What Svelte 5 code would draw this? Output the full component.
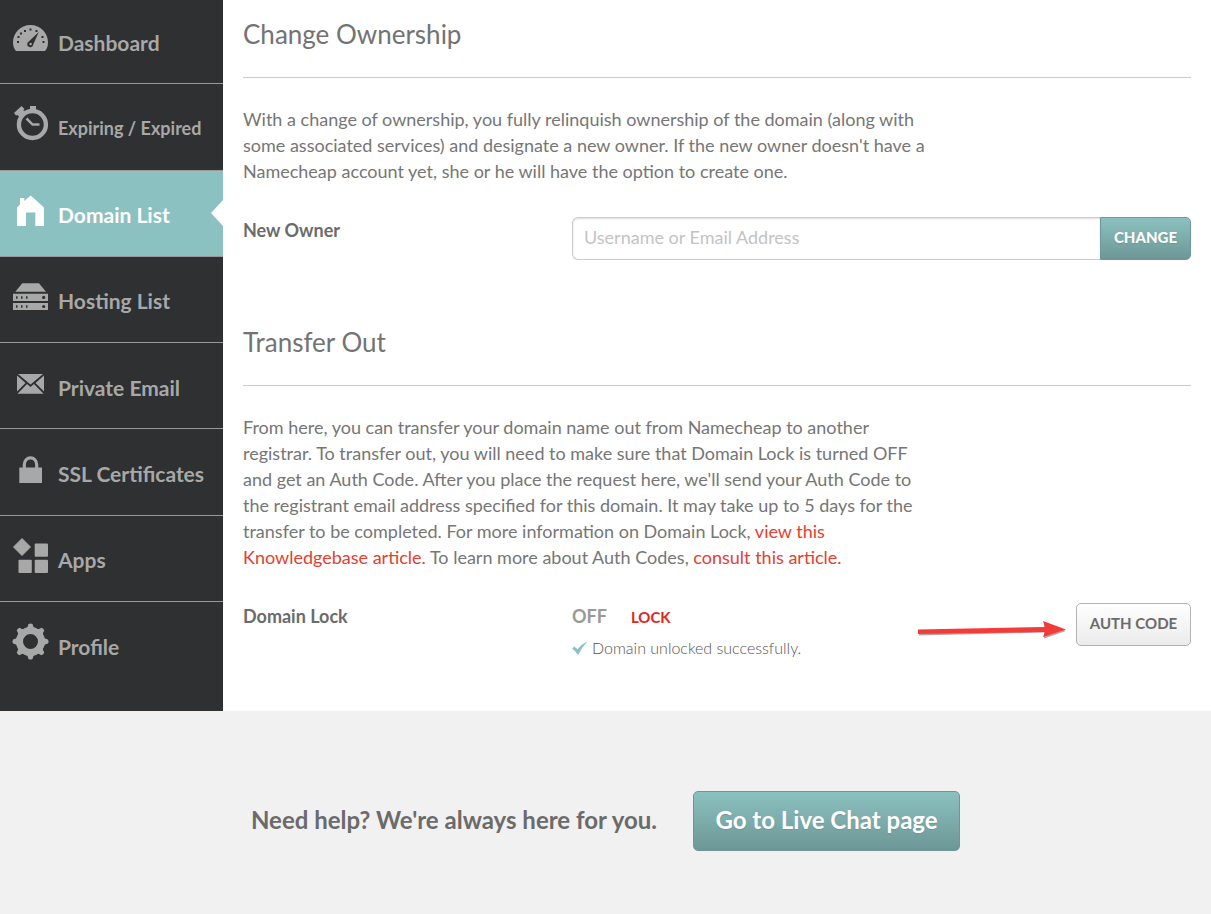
<script>
    const menu = [
        { id: "dashboard", label: "Dashboard" },
        { id: "expiring", label: "Expiring / Expired" },
        { id: "domains", label: "Domain List" },
        { id: "hosting", label: "Hosting List" },
        { id: "email", label: "Private Email" },
        { id: "ssl", label: "SSL Certificates" },
        { id: "apps", label: "Apps" },
        { id: "profile", label: "Profile" },
    ];

    let active = "domains";
    let newOwner = "";
    let locked = false;
    let showMessage = true;

    function toggleLock() {
        locked = !locked;
        showMessage = !locked;
    }
</script>

<div class="page">
    <nav class="sidebar">
        <ul>
            {#each menu as item}
                <li class:active={item.id === active}>
                    <a href="#{item.id}" on:click|preventDefault={() => (active = item.id)}>
                        <svg viewBox="0 0 36 36" aria-hidden="true">
                            {#if item.id === "dashboard"}
                                <path d="M4 31C2 29 1 26 1 22.500C1 13 8.500 5 18.500 5S36 13 36 22.500C36 26 35 29 33 31Z" />
                                <g class="cut">
                                    <path d="M26.800 12L21.200 24.500A3 3 0 1 1 16.500 21.800Z" />
                                    <rect x="17.500" y="8.500" width="2" height="2" />
                                    <rect x="12" y="10" width="2" height="2" />
                                    <rect x="23.500" y="10" width="2" height="2" />
                                    <rect x="8" y="12.500" width="2" height="2" />
                                    <rect x="5.500" y="16" width="2" height="2" />
                                    <rect x="29.500" y="16" width="2" height="2" />
                                    <rect x="5" y="21" width="2" height="2" />
                                    <rect x="30.500" y="21" width="2" height="2" />
                                </g>
                                <circle cx="18.600" cy="24" r="1.200" />
                            {:else if item.id === "expiring"}
                                <circle class="line" cx="20.400" cy="18.500" r="13.500" stroke-width="4.400" />
                                <path d="M18 0H24V5H18ZM2 7L9.500 0L12.500 3L11.500 4.500L13 6.500L8 11.500L5.500 9L4 9.500Z" />
                                <path class="line" d="M14.500 12.500L20.600 18.600H27.500" stroke-width="2.500" />
                            {:else if item.id === "domains"}
                                <path d="M5 34V15.500L8 12.500V6H12.300V9L18.700 3.500L32 15.500V34H23.300V20.500H14V34Z" />
                            {:else if item.id === "hosting"}
                                <path d="M10.300 5.300H27L34 13.700H3.300Z" />
                                <path d="M1 15.700H36V23H1ZM1 25H36V32H1Z" />
                                <g class="cut">
                                    <path d="M4 18.300h1.500v2.500H4zM9 18.300h1.500v2.500H9zM14 18.300h1.500v2.500H14zM4 27.300h1.500v2.500H4zM9 27.300h1.500v2.500H9zM14 27.300h1.500v2.500H14z" />
                                    <circle cx="31.700" cy="19.400" r="1.600" />
                                    <circle cx="31.700" cy="28.500" r="1.600" />
                                </g>
                            {:else if item.id === "email"}
                                <path d="M6 9H31L18.500 19.500ZM5 10.500L13.500 18L5 26.500ZM32 10.500V26.500L23.500 18ZM15 19L18.500 22L22 19L31.500 28.700H5.500Z" />
                            {:else if item.id === "ssl"}
                                <path d="M7.300 16.500H30V32H7.300Z" />
                                <path class="line" d="M12.300 17V13.500A6.200 6.700 0 0 1 24.700 13.500V17" stroke-width="3.200" />
                            {:else if item.id === "apps"}
                                <path d="M10 1.500L18.500 10L10 18.500L1.500 10Z" stroke="currentColor" stroke-width="1" stroke-linejoin="round" />
                                <rect x="22.700" y="6.500" width="13.300" height="13.300" rx="1" />
                                <rect x="6.500" y="22.700" width="13.300" height="13.300" rx="1" />
                                <rect x="22.700" y="22.700" width="13.300" height="13.300" rx="1" />
                            {:else}
                                <circle class="line" cx="18.500" cy="17.500" r="11" stroke-width="7" />
                                {#each [0, 45, 90, 135, 180, 225, 270, 315] as angle}
                                    <path d="M12 6L15.500 3L16.500 0Q18.500 -1 20.500 0L21.500 3L25 6Z" transform="rotate({angle} 18.500 17.500)" />
                                {/each}
                            {/if}
                        </svg>
                        <span class:long={item.id === "expiring"}>{item.label}</span>
                    </a>
                </li>
            {/each}
        </ul>
    </nav>

    <main>
        <section>
            <h2>Change Ownership</h2>
            <p>
                With a change of ownership, you fully relinquish ownership of the domain (along with<br />
                some associated services) and designate a new owner. If the new owner doesn't have a<br />
                Namecheap account yet, she or he will have the option to create one.
            </p>
            <form class="row" on:submit|preventDefault>
                <label for="new-owner">New Owner</label>
                <div class="input-group">
                    <input id="new-owner" type="text" placeholder="Username or Email Address" bind:value={newOwner} />
                    <button class="btn teal change">CHANGE</button>
                </div>
            </form>
        </section>

        <section>
            <h2>Transfer Out</h2>
            <p>
                From here, you can transfer your domain name out from Namecheap to another<br />
                registrar. To transfer out, you will need to make sure that Domain Lock is turned OFF<br />
                and get an Auth Code. After you place the request here, we'll send your Auth Code to<br />
                the registrant email address specified for this domain. It may take up to 5 days for the<br />
                transfer to be completed. For more information on Domain Lock, <a href="#lock-article">view this<br />
                Knowledgebase article.</a> To learn more about Auth Codes, <a href="#auth-article">consult this article.</a>
            </p>
            <div class="row">
                <strong class="name">Domain Lock</strong>
                <div class="lock">
                    <div>
                        <div class="state">
                            <strong>{locked ? "ON" : "OFF"}</strong>
                            <button class="toggle" on:click={toggleLock}>{locked ? "UNLOCK" : "LOCK"}</button>
                        </div>
                        {#if showMessage}
                            <div class="message">
                                <svg viewBox="0 0 16 14" aria-hidden="true">
                                    <path d="M0 7.500L2.500 5.500L5.500 8.500Q9.500 3 15.500 0.500Q10 6 6.500 13.500H5.500Q3.500 10 0 7.500Z" />
                                </svg>
                                Domain unlocked successfully.
                            </div>
                        {/if}
                    </div>
                    <div class="auth">
                        <svg class="arrow" viewBox="0 0 148 18" aria-hidden="true">
                            <path class="shade" d="M1 12.500L126 6.500V1.500L148 10L126 17.500V11.500L1 14.500Z" />
                            <path d="M0 8.500L127 6L125 0L148 8.500L125 16L127 11L0 13Z" />
                        </svg>
                        <button class="btn light">AUTH CODE</button>
                    </div>
                </div>
            </div>
        </section>
    </main>
</div>

<footer>
    <strong>Need help? We're always here for you.</strong>
    <button class="btn teal chat">Go to Live Chat page</button>
</footer>

<style>
    :global(body) {
        background: #f1f1f1;
        color: #6b6b6b;
        font-family: Lato, "Open Sans", sans-serif;
    }

    .page {
        display: grid;
        grid-template-columns: 223px 1fr;
        background: #fff;
    }

    .sidebar {
        background: #2e3031;
        overflow: hidden;
    }

    .sidebar ul {
        display: grid;
        grid-auto-rows: 1fr;
        height: 690px;
        margin: -2px 0 0;
        padding: 0;
        list-style: none;
    }

    .sidebar li {
        position: relative;
        border-bottom: 1px solid #999;
    }

    .sidebar li:last-child {
        border-bottom: none;
    }

    .sidebar a {
        display: flex;
        align-items: center;
        gap: 10px;
        height: 100%;
        padding: 0 0 0 12px;
        color: #a7a8a7;
        font-size: 21px;
        font-weight: 700;
        text-decoration: none;
    }

    .sidebar svg {
        width: 36px;
        height: 36px;
        flex: none;
        margin-bottom: 6px;
        fill: currentColor;
        overflow: visible;
    }

    .sidebar .line {
        fill: none;
        stroke: currentColor;
    }

    .sidebar .cut {
        fill: #2e3031;
    }

    .sidebar span {
        padding-top: 3px;
        white-space: nowrap;
    }

    .sidebar .long {
        font-size: 18px;
    }

    .sidebar .active {
        background: #8bc1c0;
    }

    .sidebar .active a {
        color: #fff;
    }

    .sidebar .active .cut {
        fill: #8bc1c0;
    }

    .sidebar .active::after {
        content: "";
        position: absolute;
        top: 50%;
        right: 0;
        margin-top: -13px;
        border: 13px solid transparent;
        border-left: none;
        border-right: 12px solid #fff;
    }

    main {
        padding: 0 20px 2px;
    }

    section {
        padding-bottom: 48px;
    }

    h2 {
        margin: 0 0 28px;
        padding: 18px 0 27px;
        border-bottom: 1px solid #ccc;
        color: #737373;
        font-size: 26px;
        font-weight: 400;
        line-height: 32px;
    }

    p {
        margin: 0 0 33px;
        color: #767676;
        font-size: 18px;
        line-height: 26px;
    }

    p a {
        color: #e5402f;
        text-decoration: none;
    }

    .row {
        display: grid;
        grid-template-columns: 329px 1fr;
        font-size: 18px;
        line-height: 26px;
    }

    .row label,
    .row .name {
        font-weight: 700;
    }

    .input-group {
        display: flex;
        height: 43px;
    }

    input {
        flex: 1;
        min-width: 0;
        padding: 0 11px 3px;
        border: 1px solid #ccc;
        border-right: none;
        border-radius: 6px 0 0 6px;
        box-shadow: inset 0 1px 2px #ddd;
        color: #666;
        font: inherit;
    }

    input::placeholder {
        color: #c3c3c3;
    }

    .btn {
        box-sizing: border-box;
        padding: 0 0 3px;
        border-radius: 5px;
        font: 700 15px Lato, sans-serif;
        cursor: pointer;
    }

    .teal {
        border: 1px solid #6b9897;
        background: linear-gradient(#8bc1c0, #6d9796);
        color: #fff;
        text-shadow: 0 1px 1px #6d9796;
    }

    .change {
        width: 91px;
        border-radius: 0 5px 5px 0;
        font-weight: 900;
    }

    .light {
        width: 115px;
        height: 43px;
        border: 1px solid #b3b3b3;
        background: linear-gradient(#fff, #ebebeb);
        color: #6b6b6b;
    }

    .lock {
        display: flex;
        justify-content: space-between;
        align-items: flex-start;
    }

    .state {
        display: flex;
        gap: 24px;
        align-items: baseline;
        color: #999;
    }

    .toggle {
        padding: 0;
        border: none;
        background: none;
        color: #e0281a;
        font: 700 15px Lato, sans-serif;
        cursor: pointer;
    }

    .message {
        display: flex;
        align-items: center;
        gap: 4px;
        margin-top: 6px;
        color: #555;
        font-size: 16px;
        font-weight: 300;
    }

    .message svg {
        width: 16px;
        height: 14px;
        fill: #8bc1c0;
    }

    .auth {
        display: flex;
        align-items: center;
        gap: 10px;
    }

    .arrow {
        width: 148px;
        height: 18px;
        margin-top: 10px;
        fill: #f33c3a;
    }

    .arrow .shade {
        fill: #b9a5a5;
    }

    footer {
        display: flex;
        justify-content: center;
        align-items: center;
        gap: 36px;
        padding: 80px 20px 63px;
        font-size: 24px;
    }

    footer strong {
        padding-bottom: 4px;
    }

    .chat {
        width: 267px;
        height: 60px;
        font-size: 24px;
    }
</style>
